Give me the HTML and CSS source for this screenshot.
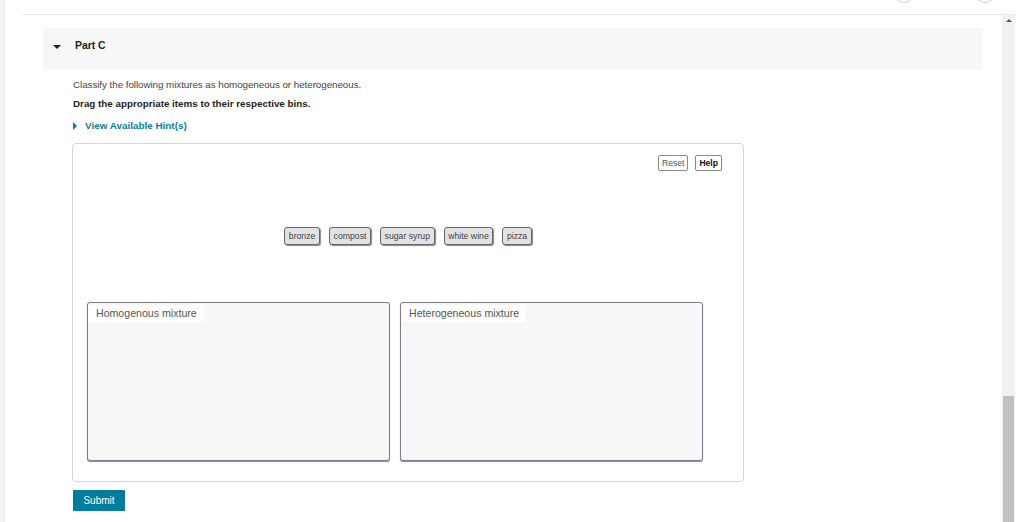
FILE: index.html
```html
<!DOCTYPE html>
<html>
<head>
<meta charset="utf-8">
<link rel="stylesheet" href="styles.css">
</head>
<body>
<div class="app">
  <div class="edge"></div>
  <div class="main">
    <div class="topbar">
      <span class="circle c1"></span>
      <span class="circle c2"></span>
    </div>
    <div class="below">
      <div class="content">
        <div class="part-header">
          <span class="tri-down"></span>
          <span class="part-title">Part C</span>
        </div>
        <div class="part-body">
          <p class="prompt">Classify the following mixtures as homogeneous or heterogeneous.</p>
          <p class="instr">Drag the appropriate items to their respective bins.</p>
          <div class="hint"><span class="tri-right"></span><span>View Available Hint(s)</span></div>
          <div class="dnd">
            <div class="tools">
              <button class="tool reset">Reset</button>
              <button class="tool help">Help</button>
            </div>
            <div class="items">
              <span class="item">bronze</span>
              <span class="item">compost</span>
              <span class="item">sugar syrup</span>
              <span class="item">white wine</span>
              <span class="item">pizza</span>
            </div>
            <div class="bins">
              <div class="bin"><span class="bin-label">Homogenous mixture</span></div>
              <div class="bin"><span class="bin-label">Heterogeneous mixture</span></div>
            </div>
          </div>
          <button class="submit">Submit</button>
        </div>
      </div>
      <div class="scrollbar">
        <span class="arrow-up"></span>
        <div class="track"></div>
        <div class="thumb"></div>
      </div>
    </div>
  </div>
</div>
</body>
</html>
```

FILE: styles.css
```css
* { box-sizing: border-box; }
html, body { margin: 0; padding: 0; background: #fff; }
body { font-family: "Liberation Sans", Arial, sans-serif; color: #333; }
.app { display: flex; height: 522px; overflow: hidden; }
.edge { width: 5px; background: #f4f4f4; border-right: 1px solid #e6e6e6; }
.main { flex: 1; display: flex; flex-direction: column; min-width: 0; }
.topbar { height: 15px; margin-left: 18px; margin-right: 9px; border-bottom: 1px solid #e8e8e8; display: flex; justify-content: flex-end; }
.circle { width: 20px; height: 20px; border: 1px solid #d0d0d0; border-radius: 50%; margin-top: -17px; background: #fff; }
.c1 { margin-right: 61px; }
.c2 { margin-right: 20px; }
.below { flex: 1; display: flex; padding-right: 9px; min-height: 0; }
.content { flex: 1; min-width: 0; }
.part-header { margin: 13px 20px 0 38px; height: 42px; background: #f7f7f7; display: flex; align-items: center; padding-left: 10px; }
.tri-down { width: 0; height: 0; border-left: 4px solid transparent; border-right: 4px solid transparent; border-top: 4px solid #222; margin-right: 14px; margin-top: -5px; }
.part-title { font-size: 10.4px; font-weight: bold; color: #222; margin-top: -7px; }
.part-body { padding-left: 68px; }
.prompt { margin: 9px 0 0; font-size: 9.8px; color: #444; line-height: 12px; letter-spacing: -0.05px; }
.instr { margin: 7px 0 0; font-size: 9.8px; font-weight: bold; color: #222; line-height: 12px; }
.hint { margin-top: 10px; display: flex; align-items: center; font-size: 9.9px; font-weight: bold; color: #0b7ca0; line-height: 12px; }
.tri-right { width: 0; height: 0; border-top: 4px solid transparent; border-bottom: 4px solid transparent; border-left: 4px solid #0b7ca0; margin-right: 8px; }
.dnd { margin-top: 11px; margin-left: -1px; width: 672px; height: 339px; border: 1px solid #d4d4d4; border-radius: 4px; padding: 11px 0 0 14px; }
.tools { display: flex; justify-content: flex-end; gap: 7px; margin-right: 21px; }
.tool { font-family: "Liberation Sans", Arial, sans-serif; font-size: 8.6px; height: 16px; padding: 0 3px; background: #fff; border: 1px solid #888; border-radius: 2px; color: #555; }
.help { font-weight: bold; color: #111; }
.items { display: flex; justify-content: center; gap: 9px; margin-top: 56px; margin-right: 14px; }
.item { font-size: 8.7px; color: #444; background: #e2e2e2; border: 1px solid #666; border-radius: 3px; height: 18px; line-height: 16px; padding: 0 3.6px; box-shadow: 1px 1px 1px #888; }
.bins { display: flex; gap: 10px; margin-top: 57px; }
.bin { width: 303px; height: 159px; background: #f7f7f7; border: 1px solid #7d7b8c; border-radius: 3px; box-shadow: 0 1px 1px #888; }
.bin-label { display: inline-block; background: #fff; font-size: 10.6px; color: #555; padding: 3px 7px 3px 8px; line-height: 11px; }
.submit { margin-top: 8px; font-family: "Liberation Sans", Arial, sans-serif; width: 52px; height: 21px; background: #007c9c; color: #fff; border: none; border-radius: 1px; font-size: 10px; padding: 0; }
.scrollbar { width: 13px; background: #f1f1f1; display: flex; flex-direction: column; align-items: center; }
.arrow-up { width: 0; height: 0; border-left: 3px solid transparent; border-right: 3px solid transparent; border-bottom: 3px solid #555; margin-top: 4px; }
.track { height: 374px; }
.thumb { flex: 1; width: 11px; background: #c1c1c1; }
```
